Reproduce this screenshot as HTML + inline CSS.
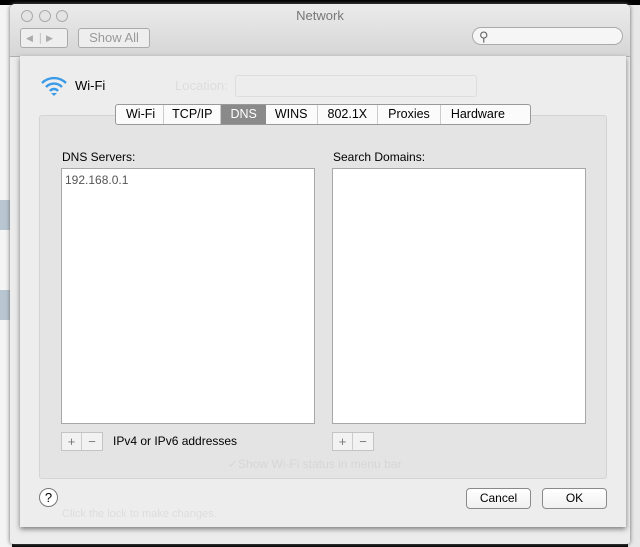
<!DOCTYPE html><html><head><style>
body{margin:0;width:640px;height:547px;background:#000;position:relative;overflow:hidden;font-family:"Liberation Sans",sans-serif;font-size:12px}
.a{position:absolute}
.btn{position:absolute;background:linear-gradient(#fff,#f0f0f0);border:1px solid #8a8a8a;border-radius:4px;text-align:center;font-size:12px;line-height:19px;color:#000}
.list{position:absolute;background:#fff;border:1px solid #a8a8a8}
.pm{position:absolute;width:40px;height:17px;border:1px solid #c4c4c4;background:#f2f2f2;font-size:13px;color:#777;line-height:17px}
.pm span{display:inline-block;width:20px;text-align:center}
</style></head><body>
<div class="a" style="left:0;top:5px;width:12px;height:542px;background:#f4f4f4"></div>
<div class="a" style="left:0;top:200px;width:12px;height:30px;background:#b8c6d2"></div>
<div class="a" style="left:0;top:290px;width:12px;height:30px;background:#b8c6d2"></div>
<div class="a" style="left:628px;top:5px;width:12px;height:542px;background:#e8e8e8"></div>
<div class="a" style="left:10px;top:4px;width:620px;height:540px;background:#ececec;border-radius:5px 5px 3px 3px;box-shadow:0 0 4px #666"></div>
<div class="a" style="left:10px;top:4px;width:620px;height:52px;background:linear-gradient(#ebebeb,#d6d6d6);border-radius:5px 5px 0 0;border-bottom:1px solid #b0b0b0"></div>
<div class="a" style="left:21px;top:10px;width:10px;height:10px;border:1px solid #aaa;border-radius:50%;background:#e4e4e4"></div>
<div class="a" style="left:39px;top:10px;width:10px;height:10px;border:1px solid #aaa;border-radius:50%;background:#e4e4e4"></div>
<div class="a" style="left:56px;top:10px;width:10px;height:10px;border:1px solid #aaa;border-radius:50%;background:#e4e4e4"></div>
<div class="a" style="left:0;top:8px;width:640px;text-align:center;color:#777;font-size:13px">Network</div>
<div class="a" style="left:20px;top:28px;width:46px;height:18px;border:1px solid #aaa;border-radius:3px;background:#eee;color:#aaa;font-size:9px;line-height:18px">&nbsp;&nbsp;◀ &nbsp;│ ▶</div>
<div class="a" style="left:78px;top:28px;width:70px;height:18px;border:1px solid #aaa;border-radius:3px;background:#eee;color:#999;font-size:13px;line-height:18px;text-align:center">Show All</div>
<div class="a" style="left:472px;top:27px;width:151px;height:18px;border:1px solid #aaa;border-radius:10px;background:#f6f6f6;color:#666;font-size:13px;line-height:18px;padding-left:6px;box-sizing:border-box">&#9906;</div>
<div class="a" style="left:20px;top:56px;width:606px;height:471px;background:#ededed;box-shadow:0 2px 5px #777"></div>
<svg class="a" style="left:40px;top:75px" width="28" height="24" viewBox="0 0 28 24"><path d="M2 8a17 17 0 0 1 24 0M6 12a11 11 0 0 1 16 0M10 16a5 5 0 0 1 8 0" stroke="#3a9ae8" stroke-width="2.4" fill="none"/><path d="M11 18l3 3 3-3z" fill="#3a9ae8"/></svg>
<div class="a" style="left:75px;top:78px;font-size:13px">Wi-Fi</div>
<div class="a" style="left:175px;top:78px;font-size:13px;color:#ddd">Location:</div>
<div class="a" style="left:235px;top:75px;width:240px;height:20px;border:1px solid #ddd;border-radius:3px"></div>
<div class="a" style="left:39px;top:115px;width:566px;height:362px;background:#e4e4e4;border:1px solid #d4d4d4;border-radius:3px"></div>
<div class="a" style="left:115px;top:104px;width:414px;height:19px;border:1px solid #999;border-radius:3px;background:#fbfbfb;display:flex;font-size:12.5px;line-height:19px;overflow:hidden;white-space:nowrap">
<span style="padding:0 8px 0 10px;border-right:1px solid #ccc">Wi-Fi</span><span style="padding:0 8px;border-right:1px solid #ccc">TCP/IP</span><span style="padding:0 9px;background:#8a8a8a;color:#fff">DNS</span><span style="padding:0 9px;border-right:1px solid #ccc">WINS</span><span style="padding:0 10px;border-right:1px solid #ccc">802.1X</span><span style="padding:0 10px;border-right:1px solid #ccc">Proxies</span><span style="padding:0 10px">Hardware</span></div>
<div class="a" style="left:62px;top:150px;font-size:12px">DNS Servers:</div>
<div class="a" style="left:333px;top:150px;font-size:12px">Search Domains:</div>
<div class="list" style="left:61px;top:168px;width:252px;height:254px"><div style="padding:4px 3px;color:#555;font-size:12px">192.168.0.1</div></div>
<div class="list" style="left:332px;top:168px;width:252px;height:254px"></div>
<div class="pm" style="left:61px;top:432px"><span style="border-right:1px solid #ccc;width:19px">+</span><span>−</span></div>
<div class="pm" style="left:332px;top:432px"><span style="border-right:1px solid #ccc;width:19px">+</span><span>−</span></div>
<div class="a" style="left:113px;top:434px;font-size:12px">IPv4 or IPv6 addresses</div>
<div class="a" style="left:228px;top:457px;font-size:12px;color:#d6d6d6">✓Show Wi-Fi status in menu bar</div>
<div class="a" style="left:39px;top:488px;width:17px;height:17px;border:1px solid #777;border-radius:50%;background:#fff;text-align:center;line-height:17px;font-size:13px">?</div>
<div class="btn" style="left:466px;top:488px;width:63px">Cancel</div>
<div class="btn" style="left:542px;top:488px;width:63px">OK</div>
<div class="a" style="left:62px;top:508px;font-size:11px;color:#ddd">Click the lock to make changes.</div>
</body></html>
